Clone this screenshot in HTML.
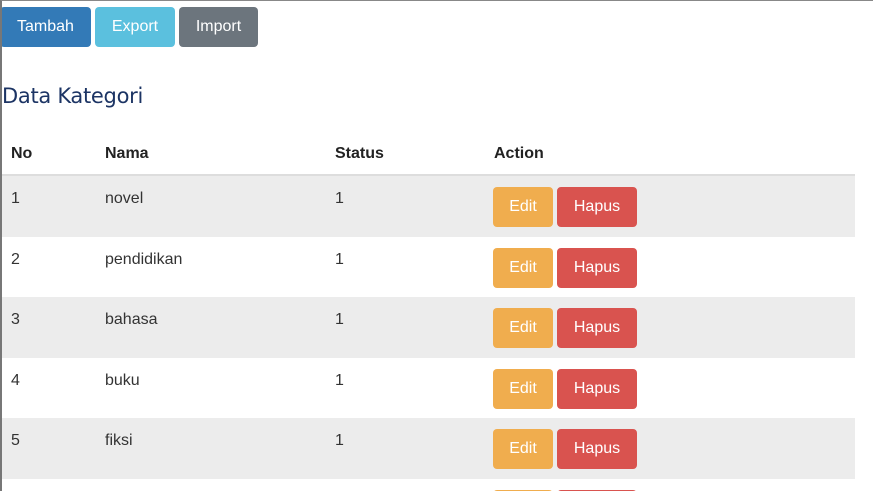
<!DOCTYPE html>
<html><head><style>
*{margin:0;padding:0;box-sizing:border-box}
html,body{width:873px;height:491px;overflow:hidden;background:#fff;font-family:"Liberation Sans",Arial,sans-serif;position:relative}
.frame{position:absolute;left:0;top:0;width:873px;height:491px;border-top:1px solid #888;border-left:2px solid #777;z-index:10;pointer-events:none}
.btn{position:absolute;height:40px;line-height:40px;text-align:center;color:#fff;font-size:16px;border-radius:4px}
h2{position:absolute;left:2px;top:84px;font-size:21px;font-weight:normal;color:#1c3464;font-family:"DejaVu Sans","Liberation Sans",sans-serif;letter-spacing:-0.3px}
.hd{position:absolute;top:145px;font-size:16px;font-weight:bold;color:#222}
.hline{position:absolute;left:0;top:174px;width:855px;height:2px;background:#ddd}
.row{position:absolute;left:0;width:855px;height:60.5px;font-size:16px;color:#333;overflow:hidden}
.row.g{background:#ececec}
.row span{position:absolute;top:14px}
.e{background:#f0ad4e;left:493px;width:60px;top:11px}
.h{background:#d9534f;left:557px;width:80px;top:11px}
</style></head><body>
<div class="frame"></div>
<div class="btn" style="left:0;top:7px;width:91px;background:#337ab7">Tambah</div>
<div class="btn" style="left:95px;top:7px;width:80px;background:#5bc0de">Export</div>
<div class="btn" style="left:179px;top:7px;width:79px;background:#6c757d">Import</div>
<h2>Data Kategori</h2>
<div class="hd" style="left:11px">No</div>
<div class="hd" style="left:105px">Nama</div>
<div class="hd" style="left:335px">Status</div>
<div class="hd" style="left:494px">Action</div>
<div class="hline"></div>
<div class="row g" style="top:176px"><span style="left:11px">1</span><span style="left:105px">novel</span><span style="left:335px">1</span><div class="btn e">Edit</div><div class="btn h">Hapus</div></div>
<div class="row" style="top:236.5px"><span style="left:11px">2</span><span style="left:105px">pendidikan</span><span style="left:335px">1</span><div class="btn e">Edit</div><div class="btn h">Hapus</div></div>
<div class="row g" style="top:297px"><span style="left:11px">3</span><span style="left:105px">bahasa</span><span style="left:335px">1</span><div class="btn e">Edit</div><div class="btn h">Hapus</div></div>
<div class="row" style="top:357.5px"><span style="left:11px">4</span><span style="left:105px">buku</span><span style="left:335px">1</span><div class="btn e">Edit</div><div class="btn h">Hapus</div></div>
<div class="row g" style="top:418px"><span style="left:11px">5</span><span style="left:105px">fiksi</span><span style="left:335px">1</span><div class="btn e">Edit</div><div class="btn h">Hapus</div></div>
<div class="row" style="top:478.5px;height:12.5px"><div class="btn e">Edit</div><div class="btn h">Hapus</div></div>
</body></html>
